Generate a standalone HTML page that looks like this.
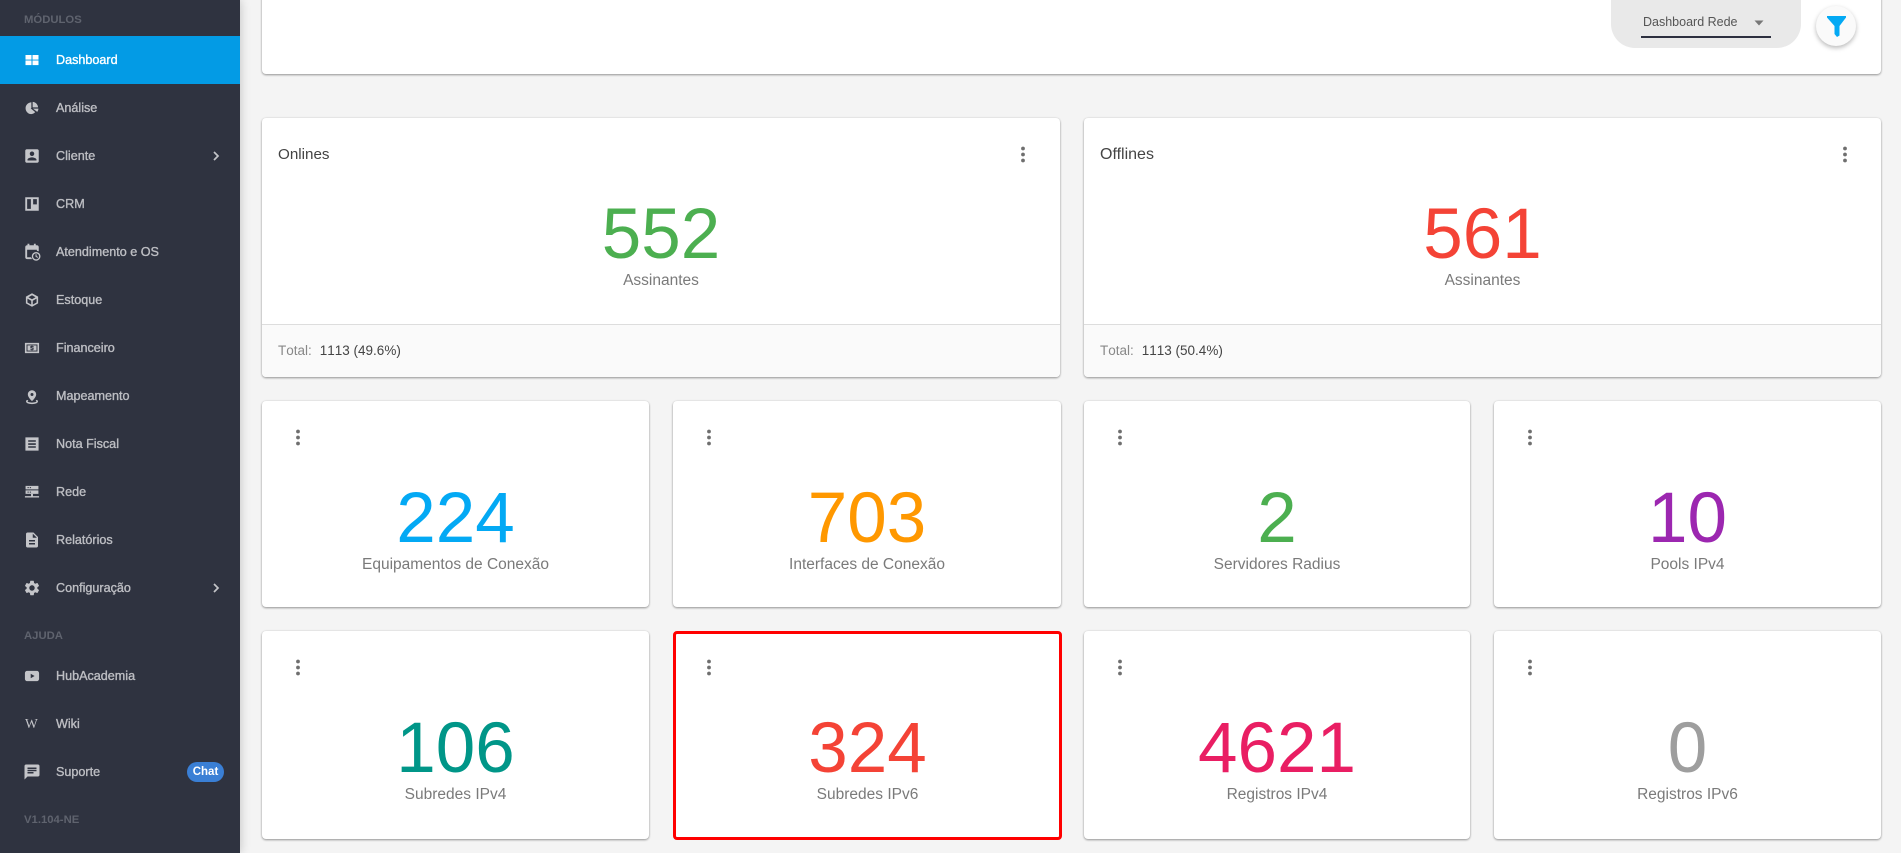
<!DOCTYPE html>
<html lang="pt-BR">
<head>
<meta charset="utf-8">
<title>Dashboard Rede</title>
<style>
html,body{margin:0;padding:0;width:1901px;height:853px;overflow:hidden;background:#f4f4f4;font-family:"Liberation Sans",Arial,sans-serif;}
*{box-sizing:border-box}
.side{position:absolute;left:0;top:0;width:240px;height:853px;background:#2f3340;box-shadow:0 0 10px rgba(0,0,0,.22);}
.active{position:absolute;left:0;top:36px;width:240px;height:48px;background:#039be5;}
.head{position:absolute;left:24px;font-size:11.3px;font-weight:bold;color:#5f636e;line-height:14px;}
.it{position:absolute;left:56px;font-size:12.6px;color:#bdbec3;line-height:16px;white-space:nowrap;font-weight:normal;-webkit-text-stroke:.35px #bdbec3;}
.ic{position:absolute;left:23px;width:18px;height:18px;fill:#c4c5c9;}
.chev{position:absolute;left:212px;width:8px;height:10px;fill:none;stroke:#c4c5c9;stroke-width:1.7;}
.card{position:absolute;background:#fff;border-radius:4px;box-shadow:0 1px 2px rgba(0,0,0,.38),0 0 2px rgba(0,0,0,.08);overflow:hidden;}
.num{position:absolute;left:0;right:0;text-align:center;font-size:71px;line-height:72px;white-space:nowrap;}
.lab{position:absolute;left:0;right:0;text-align:center;font-size:15.5px;line-height:20px;color:#7a7a7a;white-space:nowrap;}
.dots{position:absolute;width:6px;height:18px;fill:#6f6f6f;}
.title{position:absolute;left:16px;top:27px;font-size:15.2px;line-height:20px;color:#444;}
.foot{position:absolute;left:0;right:0;bottom:0;height:53px;background:#fafafa;border-top:1px solid #ddd;font-size:13.5px;line-height:42px;padding:5px 0 0 16px;white-space:nowrap;color:#444;font-kerning:none;}
.foot span{color:#888;margin-right:8px;}
</style>
</head>
<body>
<div class="side">
  <div class="head" style="top:13px">MÓDULOS</div>
  <div class="active"></div>

  <svg class="ic" style="top:52px;left:24px;width:16px;height:16px;fill:#fff" viewBox="0 0 16 16"><rect x="1.5" y="3" width="6" height="4.6"/><rect x="8.5" y="3" width="6" height="4.6"/><rect x="1.5" y="8.5" width="6" height="4.6"/><rect x="8.5" y="8.5" width="6" height="4.6"/></svg>
  <div class="it" style="top:52px;color:#fff;-webkit-text-stroke:.35px #fff">Dashboard</div>

  <svg class="ic" style="top:99px" viewBox="-2 -2 28 28"><path d="M11 3v9l-1 .5 7 6c-1.500 1.700-3.700 3-6 3-5 0-9-4.200-9-9.400C2 7.300 6 3.400 11 3zM13 2.500c4.500.3 8 3.800 8.500 8.500H13zM13.500 13H22c0 2-.8 3.700-2 5.100z"/></svg>
  <div class="it" style="top:100px">Análise</div>

  <svg class="ic" style="top:147px" viewBox="0 0 24 24"><path d="M3 5v14c0 1.100.89 2 2 2h14c1.100 0 2-.9 2-2V5c0-1.100-.9-2-2-2H5c-1.110 0-2 .9-2 2zm12 4c0 1.660-1.340 3-3 3s-3-1.340-3-3 1.340-3 3-3 3 1.340 3 3zm-9 8c0-2 4-3.100 6-3.100s6 1.100 6 3.100v1H6v-1z"/></svg>
  <div class="it" style="top:148px">Cliente</div>
  <svg class="chev" style="top:151px" viewBox="0 0 8 10"><path d="M2 1l4 4-4 4"/></svg>

  <svg class="ic" style="top:195px" viewBox="0 0 24 24"><path fill-rule="evenodd" d="M3 3h18v18H3zM5.500 5.500v13h5v-13zM13.500 5.500v7h5v-7z"/></svg>
  <div class="it" style="top:196px">CRM</div>

  <svg class="ic" style="top:243px" viewBox="0 0 24 24"><path fill-rule="evenodd" d="M6 1h2.500v2h6V1H17v2h1.500C19.900 3 21 4.100 21 5.500v5.600a7 7 0 0 0-2.500-.6V9h-13v10h5.300c.3.900.8 1.700 1.500 2.500H5.500C4.100 21.500 3 20.400 3 19V5.500C3 4.100 4.100 3 5.500 3H6z"/><path fill-rule="evenodd" d="M17.500 12a5.800 5.800 0 1 1 0 11.600 5.800 5.800 0 0 1 0-11.600zm0 1.800a4 4 0 1 0 0 8 4 4 0 0 0 0-8zm-.8 1.200h1.400v2.500l2 1.200-.7 1.100-2.700-1.600z"/></svg>
  <div class="it" style="top:244px">Atendimento e OS</div>

  <svg class="ic" style="top:291px" viewBox="-2 -2 28 28"><path fill-rule="evenodd" d="M12 1.500l9.500 5.300v10.400L12 22.500l-9.500-5.300V6.800zM6.500 7.800l5.500 3 5.500-3L12 4.700zM4.900 9.800v6l5.900 3.300v-6zM19.100 9.800l-5.900 3.300v6l5.900-3.300z"/></svg>
  <div class="it" style="top:292px">Estoque</div>

  <svg class="ic" style="top:339px" viewBox="-2 -2 28 28"><path fill-rule="evenodd" d="M1 4h22v16H1zM3.500 6.500v11h17v-11z"/><rect x="5" y="8" width="14" height="8"/><path fill="#2f3340" d="M11.300 7.800h1.400v1.100h1.800v1.300h-2.900v1h2.900v3.600h-1.800v1.100h-1.400v-1.100H9.500v-1.300h3.100v-1h-3.100V8.900h1.800z"/></svg>
  <div class="it" style="top:340px">Financeiro</div>

  <svg class="ic" style="top:388px" viewBox="-2 -2 28 28"><path fill-rule="evenodd" d="M12 1.500c3.600 0 6.500 2.900 6.500 6.500 0 3.700-3.400 7.500-6.500 10.500C8.900 15.500 5.500 11.700 5.500 8c0-3.600 2.900-6.500 6.500-6.500zm0 4.300a2.300 2.300 0 1 0 0 4.600 2.300 2.300 0 0 0 0-4.600z"/><path d="M4.500 16.500l2 .8c-1 .5-1.300 1-1.300 1.400 0 1 2.500 2 6.800 2s6.800-1 6.800-2c0-.4-.3-.9-1.300-1.400l2-.8c1.100.6 1.800 1.300 1.800 2.300 0 2.600-4.100 4.200-9.300 4.200s-9.300-1.600-9.300-4.200c0-1 .7-1.700 1.800-2.300z"/></svg>
  <div class="it" style="top:388px">Mapeamento</div>

  <svg class="ic" style="top:435px" viewBox="-1 -1 26 26"><path fill-rule="evenodd" d="M2.500 2.500h19v19h-19zM6.500 6.500v2.300h11V6.500zM6.500 10.900v2.300h11v-2.300zM6.500 15.200v2.300h11v-2.300z"/></svg>
  <div class="it" style="top:436px">Nota Fiscal</div>

  <svg class="ic" style="top:483px" viewBox="-2 -2 28 28"><path fill-rule="evenodd" d="M2 2.500h20v5.500H2zM5 4.500v1.500h2V4.500zM8.500 4.500v1.500h2V4.500zM2 9.500h20v5.500H2zM5 11.500V13h2v-1.500zM8.500 11.500V13h2v-1.500z"/><path d="M10.500 15h3v3.500H23v2H1v-2h9.500z"/></svg>
  <div class="it" style="top:484px">Rede</div>

  <svg class="ic" style="top:531px" viewBox="0 0 24 24"><path d="M14 2H6c-1.100 0-1.990.9-1.990 2L4 20c0 1.100.89 2 1.990 2H18c1.100 0 2-.9 2-2V8l-6-6zm2 16H8v-2h8v2zm0-4H8v-2h8v2zm-3-5V3.500L18.500 9H13z"/></svg>
  <div class="it" style="top:532px">Relatórios</div>

  <svg class="ic" style="top:579px" viewBox="0 0 24 24"><path d="M19.140 12.940c.04-.3.06-.61.06-.94 0-.32-.02-.64-.07-.94l2.030-1.580c.18-.14.23-.41.12-.61l-1.920-3.320c-.12-.22-.37-.29-.59-.22l-2.390.96c-.5-.38-1.030-.7-1.620-.94L14.400 2.810c-.04-.24-.24-.41-.48-.41h-3.840c-.24 0-.43.17-.47.41L9.250 5.350c-.59.24-1.130.57-1.620.94l-2.390-.96c-.22-.08-.47 0-.59.22L2.740 8.870c-.12.21-.08.47.12.61l2.030 1.580c-.05.3-.09.63-.09.94s.02.64.07.94l-2.030 1.580c-.18.14-.23.41-.12.61l1.920 3.320c.12.22.37.29.59.22l2.390-.96c.5.38 1.030.7 1.620.94l.36 2.540c.05.24.24.41.48.41h3.840c.24 0 .44-.17.47-.41l.36-2.540c.59-.24 1.130-.56 1.620-.94l2.390.96c.22.08.47 0 .59-.22l1.920-3.320c.12-.22.07-.47-.12-.61l-2.010-1.580zM12 15.600c-1.980 0-3.600-1.620-3.600-3.600s1.620-3.600 3.600-3.600 3.600 1.620 3.600 3.600-1.620 3.600-3.600 3.600z"/></svg>
  <div class="it" style="top:580px">Configuração</div>
  <svg class="chev" style="top:583px" viewBox="0 0 8 10"><path d="M2 1l4 4-4 4"/></svg>

  <div class="head" style="top:629px">AJUDA</div>

  <svg class="ic" style="top:667px" viewBox="-2 -2 28 28"><path fill-rule="evenodd" d="M4.500 4h15C21.400 4 23 5.600 23 7.500v9c0 1.900-1.600 3.500-3.500 3.500h-15C2.600 20 1 18.400 1 16.500v-9C1 5.600 2.600 4 4.500 4zM10 8.500v7l6-3.500z"/></svg>
  <div class="it" style="top:668px">HubAcademia</div>

  <div style="position:absolute;left:25px;top:716px;font-family:'Liberation Serif',serif;font-size:13.5px;line-height:16px;color:#c4c5c9">W</div>
  <div class="it" style="top:716px">Wiki</div>

  <svg class="ic" style="top:763px" viewBox="0 0 24 24"><path d="M20 2H4c-1.100 0-1.990.9-1.990 2L2 22l4-4h14c1.100 0 2-.9 2-2V4c0-1.100-.9-2-2-2zM6 9h12v2H6V9zm8 5H6v-2h8v2zm4-6H6V6h12v2z"/></svg>
  <div class="it" style="top:764px">Suporte</div>
  <div style="position:absolute;left:187px;top:762px;width:37px;height:20px;border-radius:10px;background:#3a7fd5;color:#fff;font-size:11.5px;font-weight:bold;line-height:20px;text-align:center;">Chat</div>

  <div class="head" style="top:813px">V1.104-NE</div>
</div>

<!-- top card -->
<div class="card" style="left:262px;top:-10px;width:1619px;height:84px">
  <div style="position:absolute;left:1349px;top:0;width:190px;height:58px;background:#e9e9e9;border-radius:0 0 24px 24px"></div>
  <div style="position:absolute;left:1381px;top:24px;font-size:12.5px;line-height:16px;color:#555;white-space:nowrap">Dashboard Rede</div>
  <svg style="position:absolute;left:1492px;top:30px;width:10px;height:6px" viewBox="0 0 10 6"><path d="M.5 .5h9L5 5.500z" fill="#777"/></svg>
  <div style="position:absolute;left:1379px;top:46px;width:130px;height:2px;background:#2d3040"></div>
  <div style="position:absolute;left:1554px;top:16px;width:40px;height:40px;border-radius:50%;background:#fafafa;box-shadow:0 2px 5px rgba(0,0,0,.28)"></div>
  <svg style="position:absolute;left:1565px;top:26px;width:19px;height:21px" viewBox="0 0 19 21"><path d="M0 0h19v1.500L12.500 10v9.500L10 21 7.500 18V10L0 1.500z" fill="#03a9f4"/></svg>
</div>

<!-- Onlines -->
<div class="card" style="left:262px;top:118px;width:798px;height:259px">
  <div class="title">Onlines</div>
  <svg class="dots" style="left:758px;top:28px" viewBox="0 0 6 18"><circle cx="3" cy="2.500" r="1.900"/><circle cx="3" cy="8.500" r="1.900"/><circle cx="3" cy="14.500" r="1.900"/></svg>
  <div class="num" style="top:81.400px;color:#4caf50">552</div>
  <div class="lab" style="top:153px">Assinantes</div>
  <div class="foot"><span>Total:</span>1113 (49.6%)</div>
</div>
<!-- Offlines -->
<div class="card" style="left:1084px;top:118px;width:797px;height:259px">
  <div class="title" style="font-size:16px">Offlines</div>
  <svg class="dots" style="left:758px;top:28px" viewBox="0 0 6 18"><circle cx="3" cy="2.500" r="1.900"/><circle cx="3" cy="8.500" r="1.900"/><circle cx="3" cy="14.500" r="1.900"/></svg>
  <div class="num" style="top:81.400px;color:#f44336">561</div>
  <div class="lab" style="top:153px">Assinantes</div>
  <div class="foot"><span>Total:</span>1113 (50.4%)</div>
</div>

<!-- Row 2 -->
<div class="card" style="left:262px;top:401px;width:387px;height:206px">
  <svg class="dots" style="left:33px;top:28px" viewBox="0 0 6 18"><circle cx="3" cy="2.500" r="1.900"/><circle cx="3" cy="8.500" r="1.900"/><circle cx="3" cy="14.500" r="1.900"/></svg>
  <div class="num" style="top:82.400px;color:#03a9f4">224</div>
  <div class="lab" style="top:154px">Equipamentos de Conexão</div>
</div>
<div class="card" style="left:673px;top:401px;width:388px;height:206px">
  <svg class="dots" style="left:33px;top:28px" viewBox="0 0 6 18"><circle cx="3" cy="2.500" r="1.900"/><circle cx="3" cy="8.500" r="1.900"/><circle cx="3" cy="14.500" r="1.900"/></svg>
  <div class="num" style="top:82.400px;color:#ff9800">703</div>
  <div class="lab" style="top:154px">Interfaces de Conexão</div>
</div>
<div class="card" style="left:1084px;top:401px;width:386px;height:206px">
  <svg class="dots" style="left:33px;top:28px" viewBox="0 0 6 18"><circle cx="3" cy="2.500" r="1.900"/><circle cx="3" cy="8.500" r="1.900"/><circle cx="3" cy="14.500" r="1.900"/></svg>
  <div class="num" style="top:82.400px;color:#4caf50">2</div>
  <div class="lab" style="top:154px">Servidores Radius</div>
</div>
<div class="card" style="left:1494px;top:401px;width:387px;height:206px">
  <svg class="dots" style="left:33px;top:28px" viewBox="0 0 6 18"><circle cx="3" cy="2.500" r="1.900"/><circle cx="3" cy="8.500" r="1.900"/><circle cx="3" cy="14.500" r="1.900"/></svg>
  <div class="num" style="top:82.400px;color:#9c27b0">10</div>
  <div class="lab" style="top:154px">Pools IPv4</div>
</div>

<!-- Row 3 -->
<div class="card" style="left:262px;top:631px;width:387px;height:208px">
  <svg class="dots" style="left:33px;top:28px" viewBox="0 0 6 18"><circle cx="3" cy="2.500" r="1.900"/><circle cx="3" cy="8.500" r="1.900"/><circle cx="3" cy="14.500" r="1.900"/></svg>
  <div class="num" style="top:82.400px;color:#009688">106</div>
  <div class="lab" style="top:154px">Subredes IPv4</div>
</div>
<div class="card" style="left:673px;top:631px;width:389px;height:209px;border:3px solid #f00;box-shadow:none">
  <svg class="dots" style="left:30px;top:25px" viewBox="0 0 6 18"><circle cx="3" cy="2.500" r="1.900"/><circle cx="3" cy="8.500" r="1.900"/><circle cx="3" cy="14.500" r="1.900"/></svg>
  <div class="num" style="top:79.400px;color:#f44336">324</div>
  <div class="lab" style="top:151px">Subredes IPv6</div>
</div>
<div class="card" style="left:1084px;top:631px;width:386px;height:208px">
  <svg class="dots" style="left:33px;top:28px" viewBox="0 0 6 18"><circle cx="3" cy="2.500" r="1.900"/><circle cx="3" cy="8.500" r="1.900"/><circle cx="3" cy="14.500" r="1.900"/></svg>
  <div class="num" style="top:82.400px;color:#e91e63">4621</div>
  <div class="lab" style="top:154px">Registros IPv4</div>
</div>
<div class="card" style="left:1494px;top:631px;width:387px;height:208px">
  <svg class="dots" style="left:33px;top:28px" viewBox="0 0 6 18"><circle cx="3" cy="2.500" r="1.900"/><circle cx="3" cy="8.500" r="1.900"/><circle cx="3" cy="14.500" r="1.900"/></svg>
  <div class="num" style="top:82.400px;color:#9e9e9e">0</div>
  <div class="lab" style="top:154px">Registros IPv6</div>
</div>
</body>
</html>
